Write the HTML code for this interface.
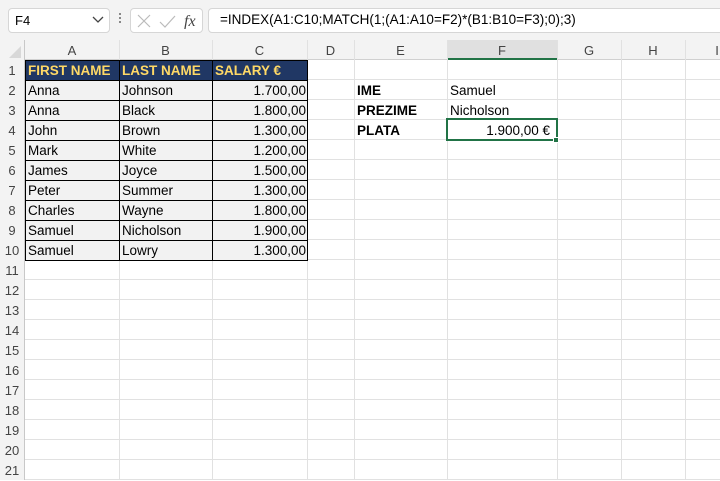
<!DOCTYPE html>
<html><head><style>
body{margin:0;width:720px;height:480px;overflow:hidden;background:#fff;font-family:"Liberation Sans",Arial,sans-serif;position:relative}
.a{position:absolute;box-sizing:border-box}
.t{position:absolute;font-size:13.5px;line-height:20px;white-space:nowrap;color:#000;margin-top:1px}
.hl{position:absolute;height:1px;background:#e1e1e1;left:25px;width:695px}
.vl{position:absolute;width:1px;background:#e1e1e1;top:40px;height:440px}
.ch{position:absolute;top:41px;height:20px;line-height:20px;text-align:center;font-size:13px;color:#444}
.rh{position:absolute;left:0;width:24px;height:20px;line-height:20px;text-align:center;font-size:13px;color:#444;margin-top:1px}
</style></head><body>
<div class="a" style="left:0;top:0;width:720px;height:40px;background:#f3f3f3"></div>
<div class="a" style="left:8px;top:8px;width:102px;height:25px;background:#fff;border:1px solid #d6d6d6;border-radius:4px"></div>
<div class="t" style="left:15px;top:10px;font-size:13px">F4</div>
<svg class="a" style="left:92px;top:16px" width="12" height="8"><path d="M1 1 L6 6 L11 1" stroke="#444" stroke-width="1.3" fill="none"/></svg>
<div class="a" style="left:119px;top:13px;width:2px;height:2px;background:#888;box-shadow:0 4px #888,0 8px #888"></div>
<div class="a" style="left:130px;top:8px;width:73px;height:25px;background:#fff;border:1px solid #d6d6d6;border-radius:4px"></div>
<svg class="a" style="left:136px;top:13px" width="70" height="16"><path d="M2 2 L14 14 M14 2 L2 14" stroke="#bbb" stroke-width="1.2"/><path d="M24 9 L29 14 L39 3" stroke="#bbb" stroke-width="1.2" fill="none"/><text x="48" y="13" font-family="Liberation Serif" font-style="italic" font-size="16" fill="#444">fx</text></svg>
<div class="a" style="left:208px;top:8px;width:520px;height:25px;background:#fff;border:1px solid #d6d6d6;border-radius:4px"></div>
<div class="t" style="left:220px;top:9px;font-size:13.5px">=INDEX(A1:C10;MATCH(1;(A1:A10=F2)*(B1:B10=F3);0);3)</div>
<div class="a" style="left:0;top:40px;width:720px;height:20px;background:#f3f3f3;border-bottom:1px solid #d0d0d0"></div>
<div class="a" style="left:0;top:40px;width:25px;height:440px;background:#f3f3f3;border-right:1px solid #c8c8c8"></div>
<div class="a" style="left:447px;top:40px;width:110px;height:20px;background:#e0e0e0;border-bottom:2px solid #217346"></div>
<svg class="a" style="left:8px;top:46px" width="14" height="12"><path d="M13 0 L13 12 L1 12 Z" fill="#d8d8d8"/></svg>
<div class="ch" style="left:25px;width:94px">A</div><div class="ch" style="left:119px;width:93px">B</div><div class="ch" style="left:212px;width:95px">C</div><div class="ch" style="left:307px;width:47px">D</div><div class="ch" style="left:354px;width:93px">E</div><div class="ch" style="left:447px;width:110px">F</div><div class="ch" style="left:557px;width:64px">G</div><div class="ch" style="left:621px;width:64px">H</div><div class="ch" style="left:685px;width:64px">I</div>
<div class="vl" style="left:119px"></div><div class="vl" style="left:212px"></div><div class="vl" style="left:307px"></div><div class="vl" style="left:354px"></div><div class="vl" style="left:447px"></div><div class="vl" style="left:557px"></div><div class="vl" style="left:621px"></div><div class="vl" style="left:685px"></div>
<div id="rows"></div>
<script>
var h='';for(var i=1;i<=21;i++){var y=59+20*i;h+='<div class="hl" style="top:'+y+'px"></div><div class="rh" style="top:'+(y-19)+'px">'+i+'</div>';}
document.getElementById('rows').innerHTML=h;
</script>
<div class="a" style="left:25px;top:60px;width:283px;height:20px;background:#203764"></div>
<div class="a" style="left:25px;top:80px;width:283px;height:180px;background:#f2f2f2"></div>
<svg class="a" style="left:25px;top:59px" width="284" height="202"><g stroke="#000" stroke-width="1" fill="none"><rect x="0.5" y="1.5" width="282" height="200"/><path d="M94.5 1 V201 M187.5 1 V201"/><path d="M0 41.5H283M0 61.5H283M0 81.5H283M0 101.5H283M0 121.5H283M0 141.5H283M0 161.5H283M0 181.5H283M0 21.5H283"/></g></svg>
<div class="t" style="left:28px;top:60px;color:#ffd966;font-weight:bold">FIRST NAME</div>
<div class="t" style="left:122px;top:60px;color:#ffd966;font-weight:bold">LAST NAME</div>
<div class="t" style="left:215px;top:60px;color:#ffd966;font-weight:bold">SALARY €</div>
<div id="tb"></div>
<script>
var d=[["Anna","Johnson","1.700,00"],["Anna","Black","1.800,00"],["John","Brown","1.300,00"],["Mark","White","1.200,00"],["James","Joyce","1.500,00"],["Peter","Summer","1.300,00"],["Charles","Wayne","1.800,00"],["Samuel","Nicholson","1.900,00"],["Samuel","Lowry","1.300,00"]];
var s='';d.forEach(function(r,i){var y=80+20*i;s+='<div class="t" style="left:28px;top:'+y+'px">'+r[0]+'</div><div class="t" style="left:122px;top:'+y+'px">'+r[1]+'</div><div class="t" style="right:414px;top:'+y+'px">'+r[2]+'</div>';});
document.getElementById('tb').innerHTML=s;
</script>
<div class="t" style="left:357px;top:80px;font-weight:bold">IME</div>
<div class="t" style="left:357px;top:100px;font-weight:bold">PREZIME</div>
<div class="t" style="left:357px;top:120px;font-weight:bold">PLATA</div>
<div class="t" style="left:450px;top:80px">Samuel</div>
<div class="t" style="left:450px;top:100px">Nicholson</div>
<div class="a" style="left:446px;top:118px;width:112px;height:23px;border:2px solid #217346"></div>
<div class="a" style="left:553px;top:137px;width:6px;height:6px;background:#217346;border:1px solid #fff"></div>
<div class="t" style="right:170px;top:120px">1.900,00 €</div>
</body></html>
